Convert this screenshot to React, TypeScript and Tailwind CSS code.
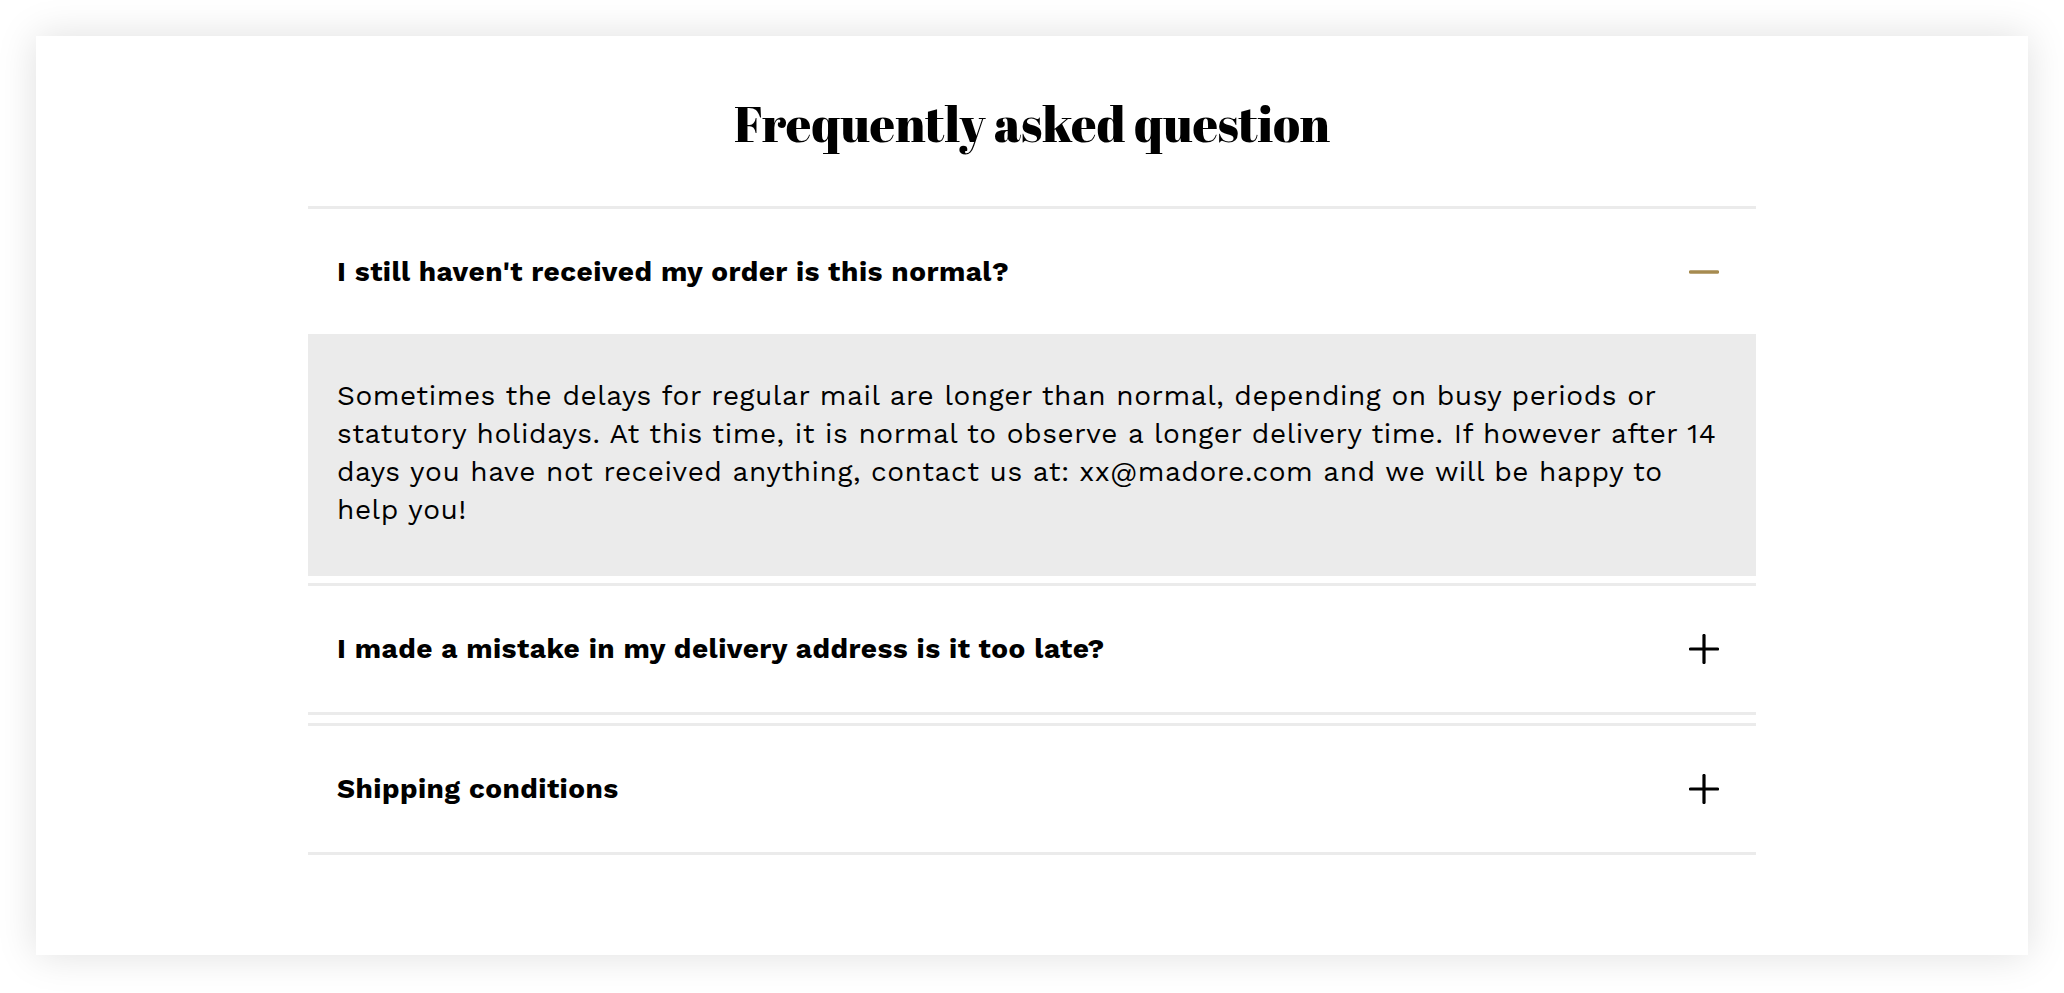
import React, { useState } from 'react';

interface FaqItem {
  question: string;
  answer: string;
}

const faqs: FaqItem[] = [
  {
    question: "I still haven't received my order is this normal?",
    answer:
      'Sometimes the delays for regular mail are longer than normal, depending on busy periods or statutory holidays. At this time, it is normal to observe a longer delivery time. If however after 14 days you have not received anything, contact us at: xx@madore.com and we will be happy to help you!',
  },
  {
    question: 'I made a mistake in my delivery address is it too late?',
    answer: 'Contact us as soon as possible at: xx@madore.com and we will do our best to update your order.',
  },
  {
    question: 'Shipping conditions',
    answer: 'Orders are shipped within 2 business days by regular mail.',
  },
];

function MinusIcon() {
  return (
    <svg width="30" height="30" viewBox="0 0 30 30" fill="none">
      <line x1="1.5" y1="15" x2="28.5" y2="15" stroke="#a68b50" strokeWidth="3.5" strokeLinecap="round" />
    </svg>
  );
}

function PlusIcon() {
  return (
    <svg width="30" height="30" viewBox="0 0 30 30" fill="none">
      <line x1="1.5" y1="15" x2="28.5" y2="15" stroke="#000" strokeWidth="3.2" strokeLinecap="round" />
      <line x1="15" y1="1.5" x2="15" y2="28.5" stroke="#000" strokeWidth="3.2" strokeLinecap="round" />
    </svg>
  );
}

export default function App() {
  const [open, setOpen] = useState<number | null>(0);

  return (
    <div className="min-h-screen bg-white p-9 font-['Work_Sans','Open_Sans',sans-serif] text-black">
      <div className="flex flex-col items-center bg-white pt-[59px] pb-[100px] shadow-[0_0_38px_rgba(0,0,0,0.13)]">
        <h1 className="h-[56px] font-['Abril_Fatface','Liberation_Serif',serif] text-[49px] font-normal leading-[56px]">
          Frequently asked question
        </h1>

        <div className="mt-[55px] w-[1448px]">
          {faqs.map((item, i) => {
            const isOpen = open === i;
            return (
              <div
                key={item.question}
                className={
                  i === 0
                    ? 'border-y-[3px] border-[#ebebeb]'
                    : i === 1
                      ? 'mt-[7px] border-y-[3px] border-[#ebebeb]'
                      : 'mt-[8px] border-y-[3px] border-[#ebebeb]'
                }
              >
                <button
                  type="button"
                  onClick={() => setOpen(isOpen ? null : i)}
                  className={
                    isOpen
                      ? 'flex h-[125px] w-full items-center justify-between pl-[29px] pr-[37px] text-left'
                      : 'flex h-[126px] w-full items-center justify-between pl-[29px] pr-[37px] text-left'
                  }
                >
                  <span className="text-[28px] font-bold tracking-[0.45px]">{item.question}</span>
                  {isOpen ? <MinusIcon /> : <PlusIcon />}
                </button>
                {isOpen && (
                  <div className="bg-[#ebebeb] px-[29px] pt-[43px] pb-[44px] text-[28px] leading-[38px] tracking-[0.55px]">
                    {item.answer}
                  </div>
                )}
              </div>
            );
          })}
        </div>
      </div>
    </div>
  );
}
